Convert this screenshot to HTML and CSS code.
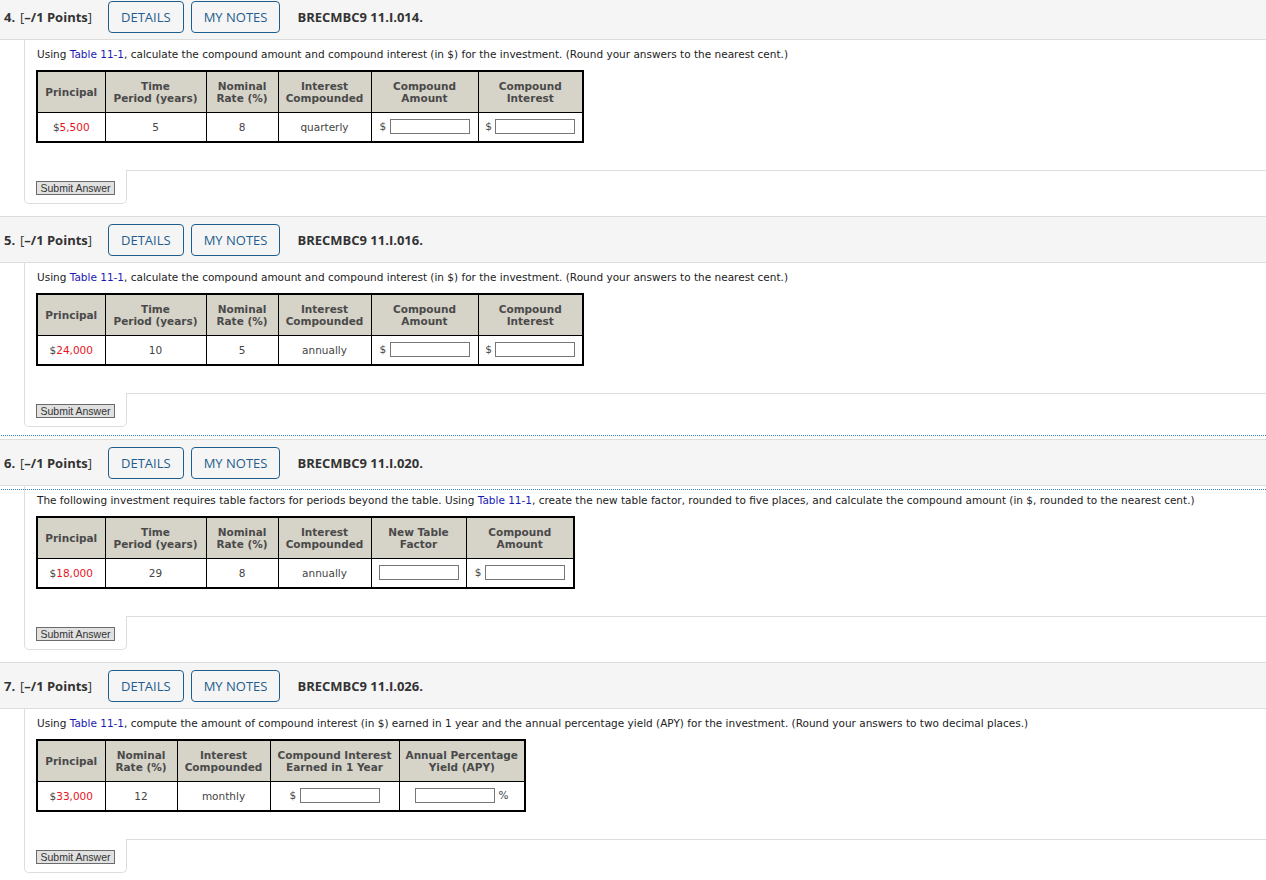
FILE: index.html
```html
<!DOCTYPE html>
<html lang="en">
<head>
  <meta charset="UTF-8">
  <title>Assignment</title>
  <link rel="stylesheet" href="styles.css">
</head>
<body>
  <div class="questions">

    <!-- 4 -->
    <div class="question">
      <div class="q-head">
        <span class="q-num">4.</span>
        <span class="q-points">[<b>&ndash;/1 Points</b>]</span>
        <button class="q-btn">DETAILS</button>
        <button class="q-btn">MY NOTES</button>
        <span class="q-code">BRECMBC9 11.I.014.</span>
      </div>
      <div class="q-body">
        <p class="q-text">Using <a href="#">Table 11-1</a>, calculate the compound amount and compound interest (in $) for the investment. (Round your answers to the nearest cent.)</p>
        <table class="grid">
          <tr>
            <th class="c-prin">Principal</th>
            <th class="c-time">Time<br>Period (years)</th>
            <th class="c-rate">Nominal<br>Rate (%)</th>
            <th class="c-comp">Interest<br>Compounded</th>
            <th class="c-ans">Compound<br>Amount</th>
            <th class="c-ans2">Compound<br>Interest</th>
          </tr>
          <tr>
            <td>$<span class="red">5,500</span></td>
            <td class="red">5</td>
            <td>8</td>
            <td>quarterly</td>
            <td>$ <input type="text"></td>
            <td>$ <input type="text"></td>
          </tr>
        </table>
      </div>
      <div class="q-foot">
        <div class="submit-cell"><button class="submit">Submit Answer</button></div>
        <div class="foot-rest"></div>
      </div>
    </div>

    <!-- 5 -->
    <div class="question">
      <div class="q-head">
        <span class="q-num">5.</span>
        <span class="q-points">[<b>&ndash;/1 Points</b>]</span>
        <button class="q-btn">DETAILS</button>
        <button class="q-btn">MY NOTES</button>
        <span class="q-code">BRECMBC9 11.I.016.</span>
      </div>
      <div class="q-body">
        <p class="q-text">Using <a href="#">Table 11-1</a>, calculate the compound amount and compound interest (in $) for the investment. (Round your answers to the nearest cent.)</p>
        <table class="grid">
          <tr>
            <th class="c-prin">Principal</th>
            <th class="c-time">Time<br>Period (years)</th>
            <th class="c-rate">Nominal<br>Rate (%)</th>
            <th class="c-comp">Interest<br>Compounded</th>
            <th class="c-ans">Compound<br>Amount</th>
            <th class="c-ans2">Compound<br>Interest</th>
          </tr>
          <tr>
            <td>$<span class="red">24,000</span></td>
            <td class="red">10</td>
            <td>5</td>
            <td>annually</td>
            <td>$ <input type="text"></td>
            <td>$ <input type="text"></td>
          </tr>
        </table>
      </div>
      <div class="q-foot">
        <div class="submit-cell"><button class="submit">Submit Answer</button></div>
        <div class="foot-rest"></div>
      </div>
    </div>

    <!-- 6 -->
    <div class="question">
      <div class="q-head focused">
        <span class="q-num">6.</span>
        <span class="q-points">[<b>&ndash;/1 Points</b>]</span>
        <button class="q-btn">DETAILS</button>
        <button class="q-btn">MY NOTES</button>
        <span class="q-code">BRECMBC9 11.I.020.</span>
      </div>
      <div class="q-body">
        <p class="q-text">The following investment requires table factors for periods beyond the table. Using <a href="#">Table 11-1</a>, create the new table factor, rounded to five places, and calculate the compound amount (in $, rounded to the nearest cent.)</p>
        <table class="grid">
          <tr>
            <th class="c-prin">Principal</th>
            <th class="c-time">Time<br>Period (years)</th>
            <th class="c-rate">Nominal<br>Rate (%)</th>
            <th class="c-comp">Interest<br>Compounded</th>
            <th class="c-factor">New Table<br>Factor</th>
            <th class="c-ans3">Compound<br>Amount</th>
          </tr>
          <tr>
            <td>$<span class="red">18,000</span></td>
            <td>29</td>
            <td class="red">8</td>
            <td>annually</td>
            <td><input type="text"></td>
            <td>$ <input type="text"></td>
          </tr>
        </table>
      </div>
      <div class="q-foot">
        <div class="submit-cell"><button class="submit">Submit Answer</button></div>
        <div class="foot-rest"></div>
      </div>
    </div>

    <!-- 7 -->
    <div class="question">
      <div class="q-head">
        <span class="q-num">7.</span>
        <span class="q-points">[<b>&ndash;/1 Points</b>]</span>
        <button class="q-btn">DETAILS</button>
        <button class="q-btn">MY NOTES</button>
        <span class="q-code">BRECMBC9 11.I.026.</span>
      </div>
      <div class="q-body">
        <p class="q-text">Using <a href="#">Table 11-1</a>, compute the amount of compound interest (in $) earned in 1 year and the annual percentage yield (APY) for the investment. (Round your answers to two decimal places.)</p>
        <table class="grid">
          <tr>
            <th class="c-prin">Principal</th>
            <th class="c-rate">Nominal<br>Rate (%)</th>
            <th class="c-comp">Interest<br>Compounded</th>
            <th class="c-earned">Compound Interest<br>Earned in 1 Year</th>
            <th class="c-apy">Annual Percentage<br>Yield (APY)</th>
          </tr>
          <tr>
            <td>$<span class="red">33,000</span></td>
            <td>12</td>
            <td>monthly</td>
            <td>$ <input type="text"></td>
            <td><input type="text"> %</td>
          </tr>
        </table>
      </div>
      <div class="q-foot">
        <div class="submit-cell"><button class="submit">Submit Answer</button></div>
        <div class="foot-rest"></div>
      </div>
    </div>

  </div>
</body>
</html>
```

FILE: styles.css
```css
* {
  box-sizing: border-box;
}

body {
  margin: 0;
  background: #fff;
  color: #333;
  font-family: 'DejaVu Sans', Verdana, sans-serif;
  overflow: hidden;
}

.questions {
  margin-top: -7px;
}

.question {
  margin-bottom: 12px;
}

/* header bar */
.q-head {
  display: flex;
  align-items: center;
  height: 47px;
  padding: 0 0 0 4px;
  background: #f5f5f5;
  border-top: 1px solid #ddd;
  border-bottom: 1px solid #ddd;
  font-family: 'Open Sans', sans-serif;
  font-size: 13px;
  color: #333;
}

.q-head.focused {
  outline: 1px dotted #3d85c6;
  outline-offset: 3px;
}

.q-num {
  font-weight: bold;
  width: 16px;
}

.q-btn {
  height: 32px;
  margin-left: 7px;
  padding: 0 12px;
  background: #f5f5f5;
  border: 1px solid #1f5f8f;
  border-radius: 4px;
  color: #245d8d;
  font-family: 'Open Sans', sans-serif;
  font-size: 13px;
}

.q-points + .q-btn {
  margin-left: 16px;
}

.q-code {
  margin-left: 17px;
  font-weight: bold;
  color: #333;
}

/* question body */
.q-body {
  margin-left: 24px;
  border-left: 1px solid #ddd;
  padding: 7px 12px 27px 11px;
}

.q-text {
  margin: 0 0 9px 1px;
  font-size: 10.5px;
  line-height: 14px;
  color: #222;
}

.q-text a {
  color: #1a1ab4;
  text-decoration: none;
}

.grid {
  border-collapse: collapse;
  border: 2px solid #000;
  font-size: 10.5px;
}

.grid th {
  height: 41px;
  padding: 0 5px;
  background: #d6d3c8;
  border: 1px solid #000;
  color: #4a4a4a;
  line-height: 12px;
  white-space: nowrap;
}

.grid td {
  height: 30px;
  padding: 0 5px;
  border: 1px solid #000;
  text-align: center;
  color: #444;
  white-space: nowrap;
}

.red {
  color: #e8141c;
}

.c-prin { width: 68px; }
.c-time { width: 101px; }
.c-rate { width: 72px; }
.c-comp { width: 93px; }
.c-ans { width: 107px; }
.c-ans2 { width: 105px; }
.c-factor { width: 95px; }
.c-ans3 { width: 108px; }
.c-earned { width: 129px; }
.c-apy { width: 126px; }

.grid input {
  width: 80px;
  height: 15px;
  margin: 0;
  padding: 0 2px;
  border: 1px solid #767676;
  vertical-align: middle;
  font-size: 10px;
}

/* footer with submit */
.q-foot {
  display: flex;
  margin-left: 24px;
}

.submit-cell {
  width: 103px;
  padding: 11px 0 8px 11px;
  border: 1px solid #ddd;
  border-top: none;
  border-radius: 0 0 5px 5px;
}

.foot-rest {
  flex: 1;
  border-top: 1px solid #ddd;
}

.submit {
  display: block;
  width: 79px;
  height: 14px;
  margin: 0;
  padding: 0;
  background: #e1e1e1;
  border: 1px solid #6b6b6b;
  font-family: 'Liberation Sans', Arial, sans-serif;
  font-size: 10.5px;
  line-height: 12px;
  color: #333;
  white-space: nowrap;
}
```
